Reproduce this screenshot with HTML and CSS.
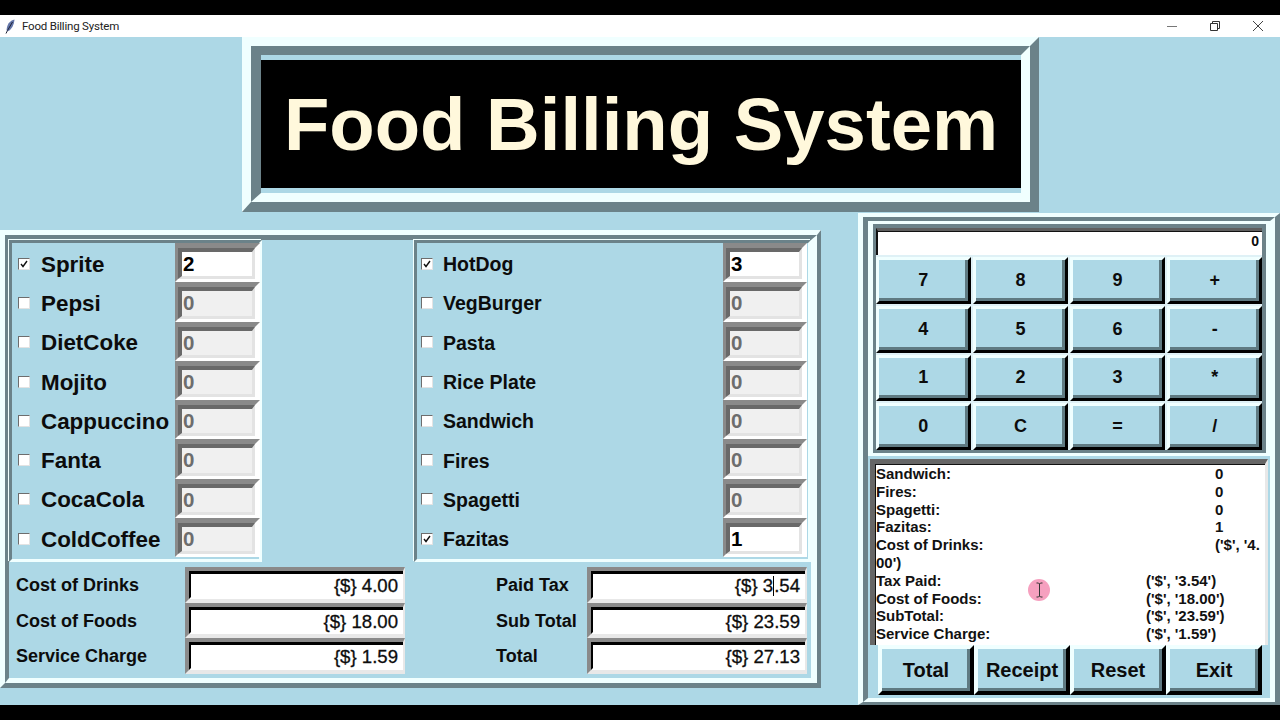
FILE: index.html
```html
<!DOCTYPE html>
<html lang="en">
<head>
<meta charset="utf-8">
<title>Food Billing System</title>
<link rel="stylesheet" href="styles.css">
</head>
<body>
<div class="screen">
  <header class="titlebar">
    <svg class="tk-icon" width="10" height="15" viewBox="0 0 10 15"><path d="M9.500 0.500C5.500 1.500 2.500 4.500 1.800 9L1.500 11.500 3.500 12C7 10 9 5.500 9.500 0.500Z" fill="#6375a8"/><path d="M7.500 3 2.500 11.500 1 14.500" fill="none" stroke="#1d2236" stroke-width="1"/></svg>
    <span class="titlebar-text">Food Billing System</span>
    <div class="controls">
      <svg width="12" height="12" viewBox="0 0 12 12"><path d="M1 6.500H11" stroke="#777" fill="none"/></svg>
      <svg width="12" height="12" viewBox="0 0 12 12"><path d="M1.500 3.500H8.500V10.500H1.500ZM3.500 3.500V1.500H10.500V8.500H8.500" stroke="#333" fill="none"/></svg>
      <svg width="12" height="12" viewBox="0 0 12 12"><path d="M1 1L11 11M11 1L1 11" stroke="#444" fill="none"/></svg>
    </div>
  </header>

  <main class="window">
    <section class="banner-outer">
      <div class="banner-inner">
        <h1 class="banner-text">Food Billing System</h1>
      </div>
    </section>

    <section class="main-frame">
      <div class="main-inner">
        <div class="menus">
          <div class="menu menu-drinks">
            <div class="item"><span class="check on"><svg width="8" height="8" viewBox="0 0 8 8"><path d="M1 4L3 6.500 7 1" fill="none" stroke="#111" stroke-width="1.400"/></svg></span><span class="item-name">Sprite</span><div class="entry"><div class="entry-in">2</div></div></div>
            <div class="item"><span class="check"></span><span class="item-name">Pepsi</span><div class="entry off"><div class="entry-in">0</div></div></div>
            <div class="item"><span class="check"></span><span class="item-name">DietCoke</span><div class="entry off"><div class="entry-in">0</div></div></div>
            <div class="item"><span class="check"></span><span class="item-name">Mojito</span><div class="entry off"><div class="entry-in">0</div></div></div>
            <div class="item"><span class="check"></span><span class="item-name">Cappuccino</span><div class="entry off"><div class="entry-in">0</div></div></div>
            <div class="item"><span class="check"></span><span class="item-name">Fanta</span><div class="entry off"><div class="entry-in">0</div></div></div>
            <div class="item"><span class="check"></span><span class="item-name">CocaCola</span><div class="entry off"><div class="entry-in">0</div></div></div>
            <div class="item"><span class="check"></span><span class="item-name">ColdCoffee</span><div class="entry off"><div class="entry-in">0</div></div></div>
          </div>
          <div class="menu menu-foods">
            <div class="item"><span class="check on"><svg width="8" height="8" viewBox="0 0 8 8"><path d="M1 4L3 6.500 7 1" fill="none" stroke="#111" stroke-width="1.400"/></svg></span><span class="item-name">HotDog</span><div class="entry"><div class="entry-in">3</div></div></div>
            <div class="item"><span class="check"></span><span class="item-name">VegBurger</span><div class="entry off"><div class="entry-in">0</div></div></div>
            <div class="item"><span class="check"></span><span class="item-name">Pasta</span><div class="entry off"><div class="entry-in">0</div></div></div>
            <div class="item"><span class="check"></span><span class="item-name">Rice Plate</span><div class="entry off"><div class="entry-in">0</div></div></div>
            <div class="item"><span class="check"></span><span class="item-name">Sandwich</span><div class="entry off"><div class="entry-in">0</div></div></div>
            <div class="item"><span class="check"></span><span class="item-name">Fires</span><div class="entry off"><div class="entry-in">0</div></div></div>
            <div class="item"><span class="check"></span><span class="item-name">Spagetti</span><div class="entry off"><div class="entry-in">0</div></div></div>
            <div class="item"><span class="check on"><svg width="8" height="8" viewBox="0 0 8 8"><path d="M1 4L3 6.500 7 1" fill="none" stroke="#111" stroke-width="1.400"/></svg></span><span class="item-name">Fazitas</span><div class="entry"><div class="entry-in">1</div></div></div>
          </div>
        </div>
        <div class="totals">
          <span class="total-label">Cost of Drinks</span><div class="amount"><div class="amount-in">{$} 4.00</div></div>
          <span class="total-label right">Paid Tax</span><div class="amount"><div class="amount-in">{$} 3<span class="caret"></span>.54</div></div>
          <span class="total-label">Cost of Foods</span><div class="amount"><div class="amount-in">{$} 18.00</div></div>
          <span class="total-label right">Sub Total</span><div class="amount"><div class="amount-in">{$} 23.59</div></div>
          <span class="total-label">Service Charge</span><div class="amount"><div class="amount-in">{$} 1.59</div></div>
          <span class="total-label right">Total</span><div class="amount"><div class="amount-in">{$} 27.13</div></div>
        </div>
      </div>
    </section>

    <aside class="side-outer">
      <div class="side-inner">
        <div class="calc-outer">
          <div class="calc">
            <div class="display">0</div>
            <button class="key">7</button><button class="key">8</button><button class="key">9</button><button class="key">+</button>
            <button class="key">4</button><button class="key">5</button><button class="key">6</button><button class="key">-</button>
            <button class="key">1</button><button class="key">2</button><button class="key">3</button><button class="key">*</button>
            <button class="key">0</button><button class="key">C</button><button class="key">=</button><button class="key">/</button>
          </div>
        </div>
        <div class="receipt">
          <div class="line"><span class="l-wide">Sandwich:</span><span>0</span></div>
          <div class="line"><span class="l-wide">Fires:</span><span>0</span></div>
          <div class="line"><span class="l-wide">Spagetti:</span><span>0</span></div>
          <div class="line"><span class="l-wide">Fazitas:</span><span>1</span></div>
          <div class="line"><span class="l-wide">Cost of Drinks:</span><span>('$', '4.</span></div>
          <div class="line">00')</div>
          <div class="line"><span class="l-mid">Tax Paid:</span><span>('$', '3.54')</span></div>
          <div class="line"><span class="l-mid">Cost of Foods:</span><span>('$', '18.00')</span></div>
          <div class="line"><span class="l-mid">SubTotal:</span><span>('$', '23.59')</span></div>
          <div class="line"><span class="l-mid">Service Charge:</span><span>('$', '1.59')</span></div>
        </div>
        <div class="actions">
          <button class="act">Total</button><button class="act">Receipt</button><button class="act">Reset</button><button class="act">Exit</button>
        </div>
      </div>
    </aside>

    <div class="pointer">
      <svg width="9" height="16" viewBox="0 0 9 16"><path d="M1.500 1H3.500L4.500 2 5.500 1H7.500M4.500 2V14M1.500 15H3.500L4.500 14 5.500 15H7.500" fill="none" stroke="#333" stroke-width="1"/></svg>
    </div>
  </main>
</div>
</body>
</html>
```
FILE: styles.css
```css
* { box-sizing: border-box; }
html, body { margin: 0; height: 100%; background: #000; overflow: hidden; }
body { font-family: "Liberation Sans", Arial, sans-serif; color: #0c0c0c; }

.screen { width: 1280px; height: 720px; padding: 15px 0; display: flex; flex-direction: column; }

.titlebar {
  height: 22px; flex: none; background: #fff; display: flex; align-items: center;
  padding-left: 5px;
}
.tk-icon { margin-right: 7px; }
.titlebar-text { font: 11.500px Roboto, "Noto Sans", sans-serif; letter-spacing: -0.200px; color: #222; }
.controls { margin-left: auto; display: flex; gap: 31px; padding-right: 16px; }

.window {
  position: relative; flex: 1; background: #add8e6;
  display: grid; grid-template-columns: 858px 422px; grid-template-rows: 176px 492px;
}

/* banner */
.banner-outer {
  grid-column: 1 / 3; grid-row: 1; margin-left: 242px; width: 797px; height: 175px;
  border: 9px solid; border-color: #f0ffff #6b8289 #6b8289 #f0ffff; border-bottom-width: 10px;
}
.banner-inner {
  height: 100%; padding: 5px 0;
  border: 9px solid; border-left-width: 10px;
  border-color: #6b8289 #f0ffff #f0ffff #6b8289;
}
.banner-text {
  margin: 0; height: 100%; background: #000; color: #fff8dc; text-align: center;
  font-size: 74.300px; font-weight: 700; line-height: 130px; white-space: nowrap;
}

/* main frame */
.main-frame {
  grid-column: 1; grid-row: 2; width: 821px; height: 458px; margin-top: 17px;
  border-style: solid; border-width: 5px 4px 5px 5px;
  border-color: #f0ffff #6b8289 #6b8289 #f0ffff;
  z-index: 1;
}
.main-inner {
  height: 100%;
  border-style: solid; border-width: 5px 6px 5px 4px;
  border-color: #6b8289 #f0ffff #f0ffff #6b8289;
}
.menus { display: grid; grid-template-columns: 253px 397px; column-gap: 152px; }

.menu {
  height: 322px;
  border: 3px solid; border-color: #6b8289 #f0ffff #f0ffff #6b8289;
  box-shadow: -1px -1px 0 #f0ffff;
  display: grid; grid-auto-rows: 39.300px;
}
.item { display: flex; align-items: center; }
.item-name { font-weight: 700; white-space: nowrap; padding-top: 4px; }
.menu-drinks .item { padding-left: 6px; }
.menu-foods .item { padding-left: 4px; }
.menu-drinks .item-name { font-size: 22.400px; width: 134px; margin-left: 11px; }
.menu-foods .item-name { font-size: 19.500px; width: 280px; margin-left: 10px; }
.check {
  margin-top: 2px;
  width: 12px; height: 12px; flex: none; background: #fff; display: flex; align-items: center; justify-content: center;
  border: 1px solid; border-color: #6d6d6d #e3e3e3 #e3e3e3 #6d6d6d;
}
.entry {
  height: 39.300px; width: 85px; flex: none;
  border-style: solid; border-width: 5px 5px 3px 3px; border-color: #8a8a8a #fff #fff #8a8a8a;
}
.menu-foods .entry { width: 84px; }
.entry-in {
  height: 100%; padding-left: 1px; background: #fff;
  border-style: solid; border-width: 4px 3px 3px 4px; border-color: #696969 #e3e3e3 #e3e3e3 #696969;
  font-size: 20.500px; font-weight: 700; line-height: 23px; color: #000;
}
.entry.off .entry-in { background: #f0f0f0; color: #6d6d6d; }

/* totals */
.totals {
  display: grid; grid-template-columns: 176px 220px 182px 220px; grid-auto-rows: 35.700px; padding-top: 5px;
}
.total-label { padding-left: 7px; font-size: 18px; font-weight: 700; line-height: 36px; white-space: nowrap; }
.total-label.right { padding-left: 91px; }
.amount { height: 35.700px; border: 4px solid; border-color: #8a8a8a #e8e8e8 #e8e8e8 #8a8a8a; border-right-width: 2px; }
.amount-in {
  height: 100%; background: #fff; padding-right: 5px; text-align: right;
  border-style: solid; border-width: 3px 0 2px 2px; border-color: #000 #fff #fff #000;
  font-size: 18.600px; line-height: 23px; -webkit-text-stroke: 0.300px #111;
}
.caret { display: inline-block; width: 0; height: 20px; margin-bottom: -4px; border-left: 1px solid #000; }

/* right panel */
.side-outer {
  grid-column: 2; grid-row: 2; height: 492px;
  border: 5px solid; border-color: #f0ffff #6b8289 #6b8289 #f0ffff; border-bottom-width: 3px; border-top-width: 4px;
  z-index: 2;
}
.side-inner {
  height: 100%; border: 4px solid; border-left-width: 5px; border-right-width: 5px;
  border-color: #6b8289 #f0ffff #f0ffff #6b8289;
}
.calc-outer {
  height: 235px; border: 3px solid #f0ffff; border-left-width: 5px; border-right-width: 4px;
}
.calc {
  height: 100%;
  border: 4px solid #6b8289; border-left-width: 3px; border-bottom-width: 3px;
  background: #dff1f6;
  display: grid; grid-template-columns: repeat(4, 1fr); grid-template-rows: 27px repeat(4, 1fr);
  column-gap: 2.500px; row-gap: 2px;
}
.display {
  grid-column: 1 / 5; background: #fff; text-align: right; padding-right: 3px;
  border-style: solid; border-width: 3px 0 0 2px; border-color: #5e5e5e #fff #fff #111;
  box-shadow: inset 0 1px 0 #111;
  font-size: 14px; font-weight: 700; line-height: 21px;
}
.key, .act {
  background: #add8e6; color: #0c0c0c; padding: 0; font-family: inherit; font-weight: 700;
  border-style: solid; border-color: #f0ffff #000 #000 #f0ffff;
}
.key { border-width: 3px; box-shadow: inset -3px -3px 0 #5f7a82; font-size: 18px; }

.receipt {
  height: 186px; margin: 3px 0 0 2px; width: 398px; background: #fff; overflow: hidden;
  border-style: solid; border-width: 5px 3px 0 5px; border-color: #666 #e8e8e8 #fff #666;
  box-shadow: inset 1px 1px 0 #111;
  padding: 1px 0 0 1px; font-size: 15px; font-weight: 700; line-height: 17.800px; color: #111;
}
.line { display: flex; white-space: nowrap; height: 17.800px; }
.l-wide { width: 339px; flex: none; }
.l-mid { width: 270px; flex: none; }

.actions {
  height: 50px; padding: 0 4px 0 10px;
  display: grid; grid-template-columns: repeat(4, 96px);
}
.act { border-width: 4px; box-shadow: inset -3px -3px 0 #5f7a82; font-size: 20px; }

/* pointer */
.pointer {
  position: absolute; left: 1028px; top: 542px; width: 22px; height: 22px; border-radius: 50%;
  background: #f6a0bf; z-index: 3; display: flex; align-items: center; justify-content: center;
}
```
